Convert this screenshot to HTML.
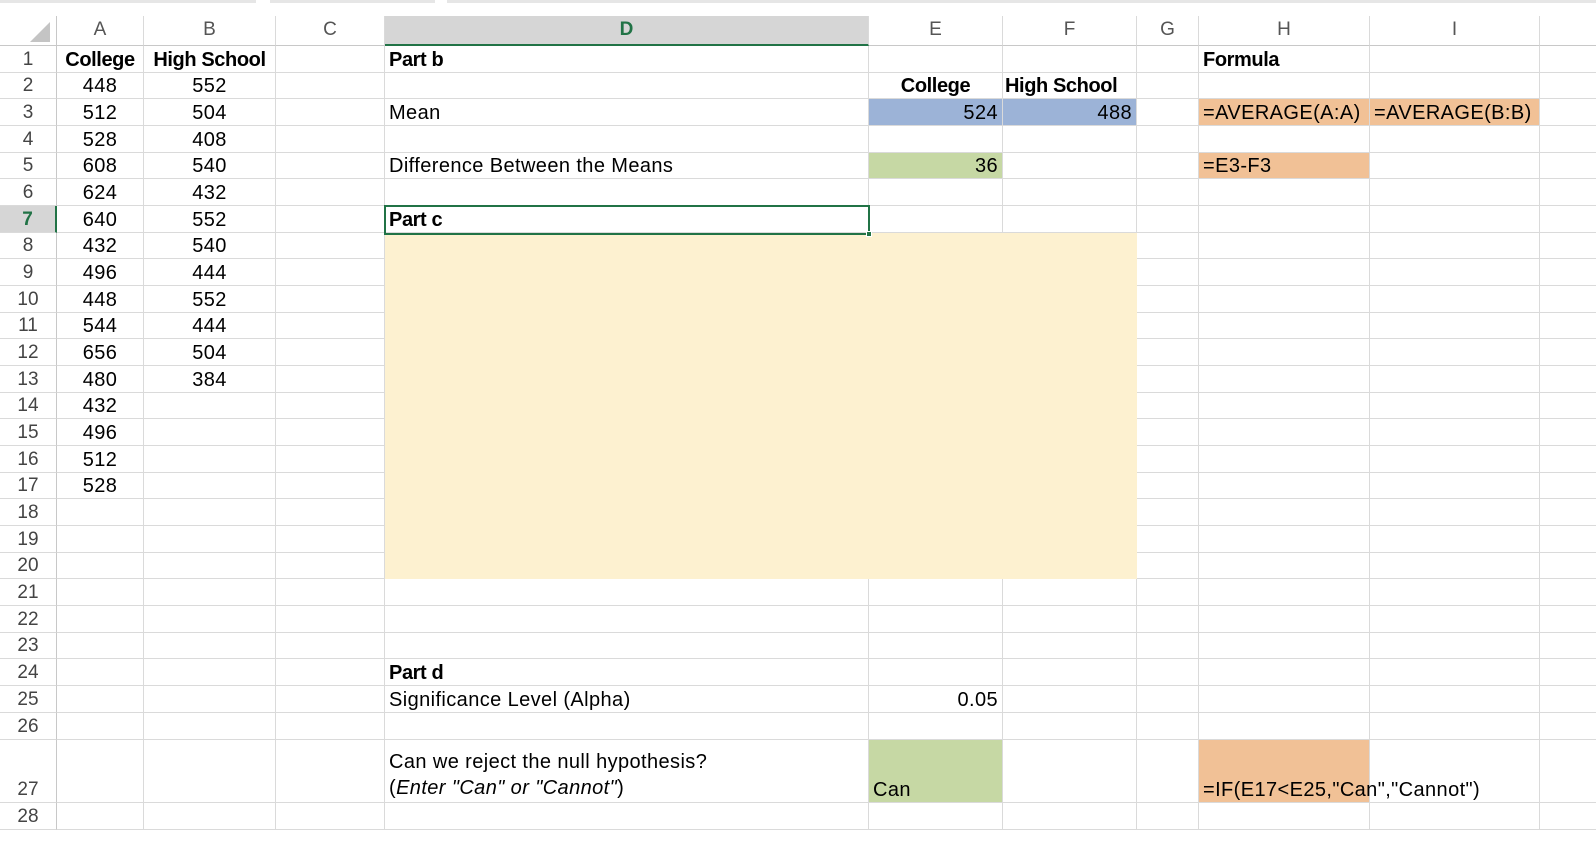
<!DOCTYPE html><html><head><meta charset="utf-8"><style>
*{box-sizing:border-box;margin:0;padding:0}
body{width:1596px;height:846px;overflow:hidden;background:#fff;font-family:"Liberation Sans",Arial,sans-serif;position:relative}
.top{position:absolute;left:0;top:0;width:1596px;height:16px;background:#fff}
.top div{position:absolute;top:0;height:3px;background:#e6e6e6}
.r{position:absolute;left:0;display:flex;width:1596px}
.c{flex:none;border-right:1px solid #dadada;border-bottom:1px solid #dadada;font-size:20px;letter-spacing:0.4px;color:#000;white-space:nowrap;overflow:visible;display:flex;align-items:flex-end;padding:0 4px 1px;line-height:22px}
.c:nth-child(1){width:57px;justify-content:center;color:#444;border-right:1px solid #c8c8c8;font-size:19px;letter-spacing:0}
.c:nth-child(2){width:87px;justify-content:center}
.c:nth-child(3){width:132px;justify-content:center}
.c:nth-child(4){width:109px}
.c:nth-child(5){width:484px}
.c:nth-child(6){width:134px}
.c:nth-child(7){width:134px}
.c:nth-child(8){width:62px}
.c:nth-child(9){width:171px}
.c:nth-child(10){width:170px}
.c:nth-child(11){width:56px;border-right:none}
.h .c{justify-content:center;color:#555;font-size:19px;border-bottom:1px solid #c8c8c8;align-items:center;letter-spacing:0}
.b{font-weight:bold;letter-spacing:-0.4px}
.rt{justify-content:flex-end!important}
.bl{background:#9cb3d7}.gr{background:#c6d8a4}.or{background:#f1c196}.ye{background:#fdf1d0;border-color:#fdf1d0!important}
.sel{position:absolute;left:384px;top:205px;width:486px;height:30px;border:2px solid #217346}
</style></head><body>
<div class="top"><div style="left:0;width:256px"></div><div style="left:270px;width:165px"></div><div style="left:447px;width:1149px"></div></div>
<div class="r h" style="top:16px;height:30px"><div class="c" style="background:#fff;position:relative"><span style="position:absolute;left:30px;top:6px;width:0;height:0;border-left:20px solid transparent;border-bottom:20px solid #c4c4c4"></span></div><div class="c">A</div><div class="c">B</div><div class="c">C</div><div class="c" style="background:#d6d6d6;color:#217346;border-bottom:2px solid #217346;font-weight:bold">D</div><div class="c">E</div><div class="c">F</div><div class="c">G</div><div class="c">H</div><div class="c">I</div><div class="c"></div></div>

<div class="r" style="top:46px;height:27px"><div class="c">1</div><div class="c b">College</div><div class="c b">High School</div><div class="c"></div><div class="c b">Part b</div><div class="c"></div><div class="c"></div><div class="c"></div><div class="c b">Formula</div><div class="c"></div><div class="c"></div></div>
<div class="r" style="top:73px;height:26px"><div class="c">2</div><div class="c">448</div><div class="c">552</div><div class="c"></div><div class="c"></div><div class="c b" style="justify-content:center">College</div><div class="c b" style="padding-left:2px">High School</div><div class="c"></div><div class="c"></div><div class="c"></div><div class="c"></div></div>
<div class="r" style="top:99px;height:27px"><div class="c">3</div><div class="c">512</div><div class="c">504</div><div class="c"></div><div class="c">Mean</div><div class="c bl rt">524</div><div class="c bl rt">488</div><div class="c"></div><div class="c or">=AVERAGE(A:A)</div><div class="c or">=AVERAGE(B:B)</div><div class="c"></div></div>
<div class="r" style="top:126px;height:27px"><div class="c">4</div><div class="c">528</div><div class="c">408</div><div class="c"></div><div class="c"></div><div class="c"></div><div class="c"></div><div class="c"></div><div class="c"></div><div class="c"></div><div class="c"></div></div>
<div class="r" style="top:153px;height:26px"><div class="c">5</div><div class="c">608</div><div class="c">540</div><div class="c"></div><div class="c">Difference Between the Means</div><div class="c gr rt">36</div><div class="c"></div><div class="c"></div><div class="c or">=E3-F3</div><div class="c"></div><div class="c"></div></div>
<div class="r" style="top:179px;height:27px"><div class="c">6</div><div class="c">624</div><div class="c">432</div><div class="c"></div><div class="c"></div><div class="c"></div><div class="c"></div><div class="c"></div><div class="c"></div><div class="c"></div><div class="c"></div></div>
<div class="r" style="top:206px;height:27px"><div class="c" style="background:#d6d6d6;color:#217346;border-right:2px solid #217346;font-weight:bold">7</div><div class="c">640</div><div class="c">552</div><div class="c"></div><div class="c b">Part c</div><div class="c"></div><div class="c"></div><div class="c"></div><div class="c"></div><div class="c"></div><div class="c"></div></div>
<div class="r" style="top:233px;height:26px"><div class="c">8</div><div class="c">432</div><div class="c">540</div><div class="c"></div><div class="c ye"></div><div class="c ye"></div><div class="c ye"></div><div class="c"></div><div class="c"></div><div class="c"></div><div class="c"></div></div>
<div class="r" style="top:259px;height:27px"><div class="c">9</div><div class="c">496</div><div class="c">444</div><div class="c"></div><div class="c ye"></div><div class="c ye"></div><div class="c ye"></div><div class="c"></div><div class="c"></div><div class="c"></div><div class="c"></div></div>
<div class="r" style="top:286px;height:27px"><div class="c">10</div><div class="c">448</div><div class="c">552</div><div class="c"></div><div class="c ye"></div><div class="c ye"></div><div class="c ye"></div><div class="c"></div><div class="c"></div><div class="c"></div><div class="c"></div></div>
<div class="r" style="top:313px;height:26px"><div class="c">11</div><div class="c">544</div><div class="c">444</div><div class="c"></div><div class="c ye"></div><div class="c ye"></div><div class="c ye"></div><div class="c"></div><div class="c"></div><div class="c"></div><div class="c"></div></div>
<div class="r" style="top:339px;height:27px"><div class="c">12</div><div class="c">656</div><div class="c">504</div><div class="c"></div><div class="c ye"></div><div class="c ye"></div><div class="c ye"></div><div class="c"></div><div class="c"></div><div class="c"></div><div class="c"></div></div>
<div class="r" style="top:366px;height:27px"><div class="c">13</div><div class="c">480</div><div class="c">384</div><div class="c"></div><div class="c ye"></div><div class="c ye"></div><div class="c ye"></div><div class="c"></div><div class="c"></div><div class="c"></div><div class="c"></div></div>
<div class="r" style="top:393px;height:26px"><div class="c">14</div><div class="c">432</div><div class="c"></div><div class="c"></div><div class="c ye"></div><div class="c ye"></div><div class="c ye"></div><div class="c"></div><div class="c"></div><div class="c"></div><div class="c"></div></div>
<div class="r" style="top:419px;height:27px"><div class="c">15</div><div class="c">496</div><div class="c"></div><div class="c"></div><div class="c ye"></div><div class="c ye"></div><div class="c ye"></div><div class="c"></div><div class="c"></div><div class="c"></div><div class="c"></div></div>
<div class="r" style="top:446px;height:27px"><div class="c">16</div><div class="c">512</div><div class="c"></div><div class="c"></div><div class="c ye"></div><div class="c ye"></div><div class="c ye"></div><div class="c"></div><div class="c"></div><div class="c"></div><div class="c"></div></div>
<div class="r" style="top:473px;height:26px"><div class="c">17</div><div class="c">528</div><div class="c"></div><div class="c"></div><div class="c ye"></div><div class="c ye"></div><div class="c ye"></div><div class="c"></div><div class="c"></div><div class="c"></div><div class="c"></div></div>
<div class="r" style="top:499px;height:27px"><div class="c">18</div><div class="c"></div><div class="c"></div><div class="c"></div><div class="c ye"></div><div class="c ye"></div><div class="c ye"></div><div class="c"></div><div class="c"></div><div class="c"></div><div class="c"></div></div>
<div class="r" style="top:526px;height:27px"><div class="c">19</div><div class="c"></div><div class="c"></div><div class="c"></div><div class="c ye"></div><div class="c ye"></div><div class="c ye"></div><div class="c"></div><div class="c"></div><div class="c"></div><div class="c"></div></div>
<div class="r" style="top:553px;height:26px"><div class="c">20</div><div class="c"></div><div class="c"></div><div class="c"></div><div class="c ye"></div><div class="c ye"></div><div class="c ye"></div><div class="c"></div><div class="c"></div><div class="c"></div><div class="c"></div></div>
<div class="r" style="top:579px;height:27px"><div class="c">21</div><div class="c"></div><div class="c"></div><div class="c"></div><div class="c"></div><div class="c"></div><div class="c"></div><div class="c"></div><div class="c"></div><div class="c"></div><div class="c"></div></div>
<div class="r" style="top:606px;height:27px"><div class="c">22</div><div class="c"></div><div class="c"></div><div class="c"></div><div class="c"></div><div class="c"></div><div class="c"></div><div class="c"></div><div class="c"></div><div class="c"></div><div class="c"></div></div>
<div class="r" style="top:633px;height:26px"><div class="c">23</div><div class="c"></div><div class="c"></div><div class="c"></div><div class="c"></div><div class="c"></div><div class="c"></div><div class="c"></div><div class="c"></div><div class="c"></div><div class="c"></div></div>
<div class="r" style="top:659px;height:27px"><div class="c">24</div><div class="c"></div><div class="c"></div><div class="c"></div><div class="c b">Part d</div><div class="c"></div><div class="c"></div><div class="c"></div><div class="c"></div><div class="c"></div><div class="c"></div></div>
<div class="r" style="top:686px;height:27px"><div class="c">25</div><div class="c"></div><div class="c"></div><div class="c"></div><div class="c">Significance Level (Alpha)</div><div class="c rt">0.05</div><div class="c"></div><div class="c"></div><div class="c"></div><div class="c"></div><div class="c"></div></div>
<div class="r" style="top:713px;height:27px"><div class="c">26</div><div class="c"></div><div class="c"></div><div class="c"></div><div class="c"></div><div class="c"></div><div class="c"></div><div class="c"></div><div class="c"></div><div class="c"></div><div class="c"></div></div>
<div class="r" style="top:740px;height:63px"><div class="c">27</div><div class="c"></div><div class="c"></div><div class="c"></div><div class="c" style="white-space:normal;line-height:26px"><div>Can we reject the null hypothesis?<br>(<i>Enter "Can" or "Cannot"</i>)</div></div><div class="c gr">Can</div><div class="c"></div><div class="c"></div><div class="c or">=IF(E17&lt;E25,"Can","Cannot")</div><div class="c"></div><div class="c"></div></div>
<div class="r" style="top:803px;height:27px"><div class="c">28</div><div class="c"></div><div class="c"></div><div class="c"></div><div class="c"></div><div class="c"></div><div class="c"></div><div class="c"></div><div class="c"></div><div class="c"></div><div class="c"></div></div>
<div class="sel"></div><div style="position:absolute;left:866px;top:231px;width:6px;height:6px;background:#217346;border:1px solid #fff"></div>
</body></html>
